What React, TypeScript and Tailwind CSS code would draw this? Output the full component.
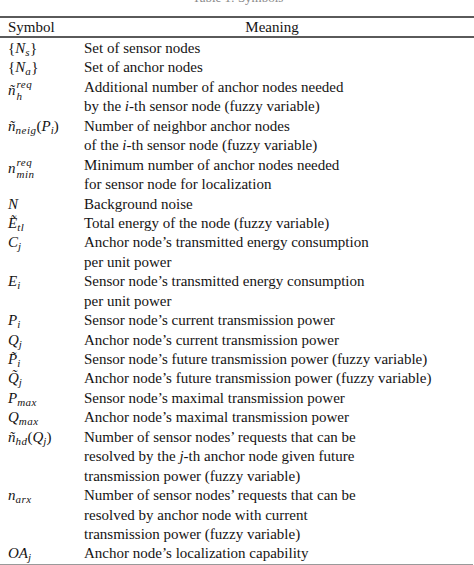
import React from "react";

type SymProps = { pre?: string; base: string; sub?: string; sup?: string; post?: React.ReactNode };

function Sym({ pre, base, sub, sup, post }: SymProps) {
  return (
    <span className="whitespace-nowrap">
      {pre && <span className="not-italic">{pre}</span>}
      <span className="italic">{base}</span>
      {sub && !sup && (
        <span className="italic text-[11px] leading-none align-[-3px] tracking-[0.5px]">{sub}</span>
      )}
      {sub && sup && (
        <span className="inline-flex flex-col italic text-[11px] leading-[12px] align-[7px] pl-[1px] tracking-[0.5px]">
          <span>{sup}</span>
          <span>{sub}</span>
        </span>
      )}
      {post}
    </span>
  );
}

const rows: { sym: React.ReactNode; lines: React.ReactNode[] }[] = [
  { sym: <Sym pre="{" base="N" sub="s" post="}" />, lines: ["Set of sensor nodes"] },
  { sym: <Sym pre="{" base="N" sub="a" post="}" />, lines: ["Set of anchor nodes"] },
  {
    sym: <Sym base="ñ" sub="h" sup="req" />,
    lines: [
      "Additional number of anchor nodes needed",
      <>by the <i>i</i>-th sensor node (fuzzy variable)</>,
    ],
  },
  {
    sym: (
      <Sym
        base="ñ"
        sub="neig"
        post={
          <>
            (<i>P</i>
            <i className="text-[11px] leading-none align-[-3px]">i</i>)
          </>
        }
      />
    ),
    lines: [
      "Number of neighbor anchor nodes",
      <>of the <i>i</i>-th sensor node (fuzzy variable)</>,
    ],
  },
  {
    sym: <Sym base="n" sub="min" sup="req" />,
    lines: ["Minimum number of anchor nodes needed", "for sensor node for localization"],
  },
  { sym: <Sym base="N" />, lines: ["Background noise"] },
  { sym: <Sym base="Ẽ" sub="tl" />, lines: ["Total energy of the node (fuzzy variable)"] },
  {
    sym: <Sym base="C" sub="j" />,
    lines: ["Anchor node’s transmitted energy consumption", "per unit power"],
  },
  {
    sym: <Sym base="E" sub="i" />,
    lines: ["Sensor node’s transmitted energy consumption", "per unit power"],
  },
  { sym: <Sym base="P" sub="i" />, lines: ["Sensor node’s current transmission power"] },
  { sym: <Sym base="Q" sub="j" />, lines: ["Anchor node’s current transmission power"] },
  { sym: <Sym base={"P\u0303"} sub="i" />, lines: ["Sensor node’s future transmission power (fuzzy variable)"] },
  { sym: <Sym base={"Q\u0303"} sub="j" />, lines: ["Anchor node’s future transmission power (fuzzy variable)"] },
  { sym: <Sym base="P" sub="max" />, lines: ["Sensor node’s maximal transmission power"] },
  { sym: <Sym base="Q" sub="max" />, lines: ["Anchor node’s maximal transmission power"] },
  {
    sym: (
      <Sym
        base="ñ"
        sub="hd"
        post={
          <>
            (<i>Q</i>
            <i className="text-[11px] leading-none align-[-3px]">j</i>)
          </>
        }
      />
    ),
    lines: [
      "Number of sensor nodes’ requests that can be",
      <>resolved by the <i>j</i>-th anchor node given future</>,
      "transmission power (fuzzy variable)",
    ],
  },
  {
    sym: <Sym base="n" sub="arx" />,
    lines: [
      "Number of sensor nodes’ requests that can be",
      "resolved by anchor node with current",
      "transmission power (fuzzy variable)",
    ],
  },
  { sym: <Sym base="OA" sub="j" />, lines: ["Anchor node’s localization capability"] },
];

export default function App() {
  return (
    <div className="w-[474px] h-[565px] overflow-hidden bg-white text-[#151313] font-['Liberation_Serif',serif] text-[15px]">
      <div className="h-[16px] overflow-hidden">
        <div className="-mt-[9px] text-center text-[13px] leading-[13px] text-[#888] pl-[2px]">
          Table 1: Symbols
        </div>
      </div>
      <div className="h-[2px] bg-[#5a5a5a]" />
      <div className="grid grid-cols-[84px_1fr] leading-[18px] h-[18px]">
        <div className="pl-[8px]">Symbol</div>
        <div className="text-center pr-[14px]">Meaning</div>
      </div>
      <div className="h-[2px] bg-[#5a5a5a]" />
      <div className="pt-[1px] leading-[19.45px]">
        {rows.map((r, i) => (
          <div key={i} className="grid grid-cols-[84px_1fr]">
            <div className="pl-[8px] h-[19.45px]">{r.sym}</div>
            <div className="flex flex-col">
              {r.lines.map((l, j) => (
                <div key={j} className="h-[19.45px] whitespace-nowrap">
                  {l}
                </div>
              ))}
            </div>
          </div>
        ))}
      </div>
      <div className="h-[3px] bg-[#9a9a9a] w-[473px]" />
    </div>
  );
}
